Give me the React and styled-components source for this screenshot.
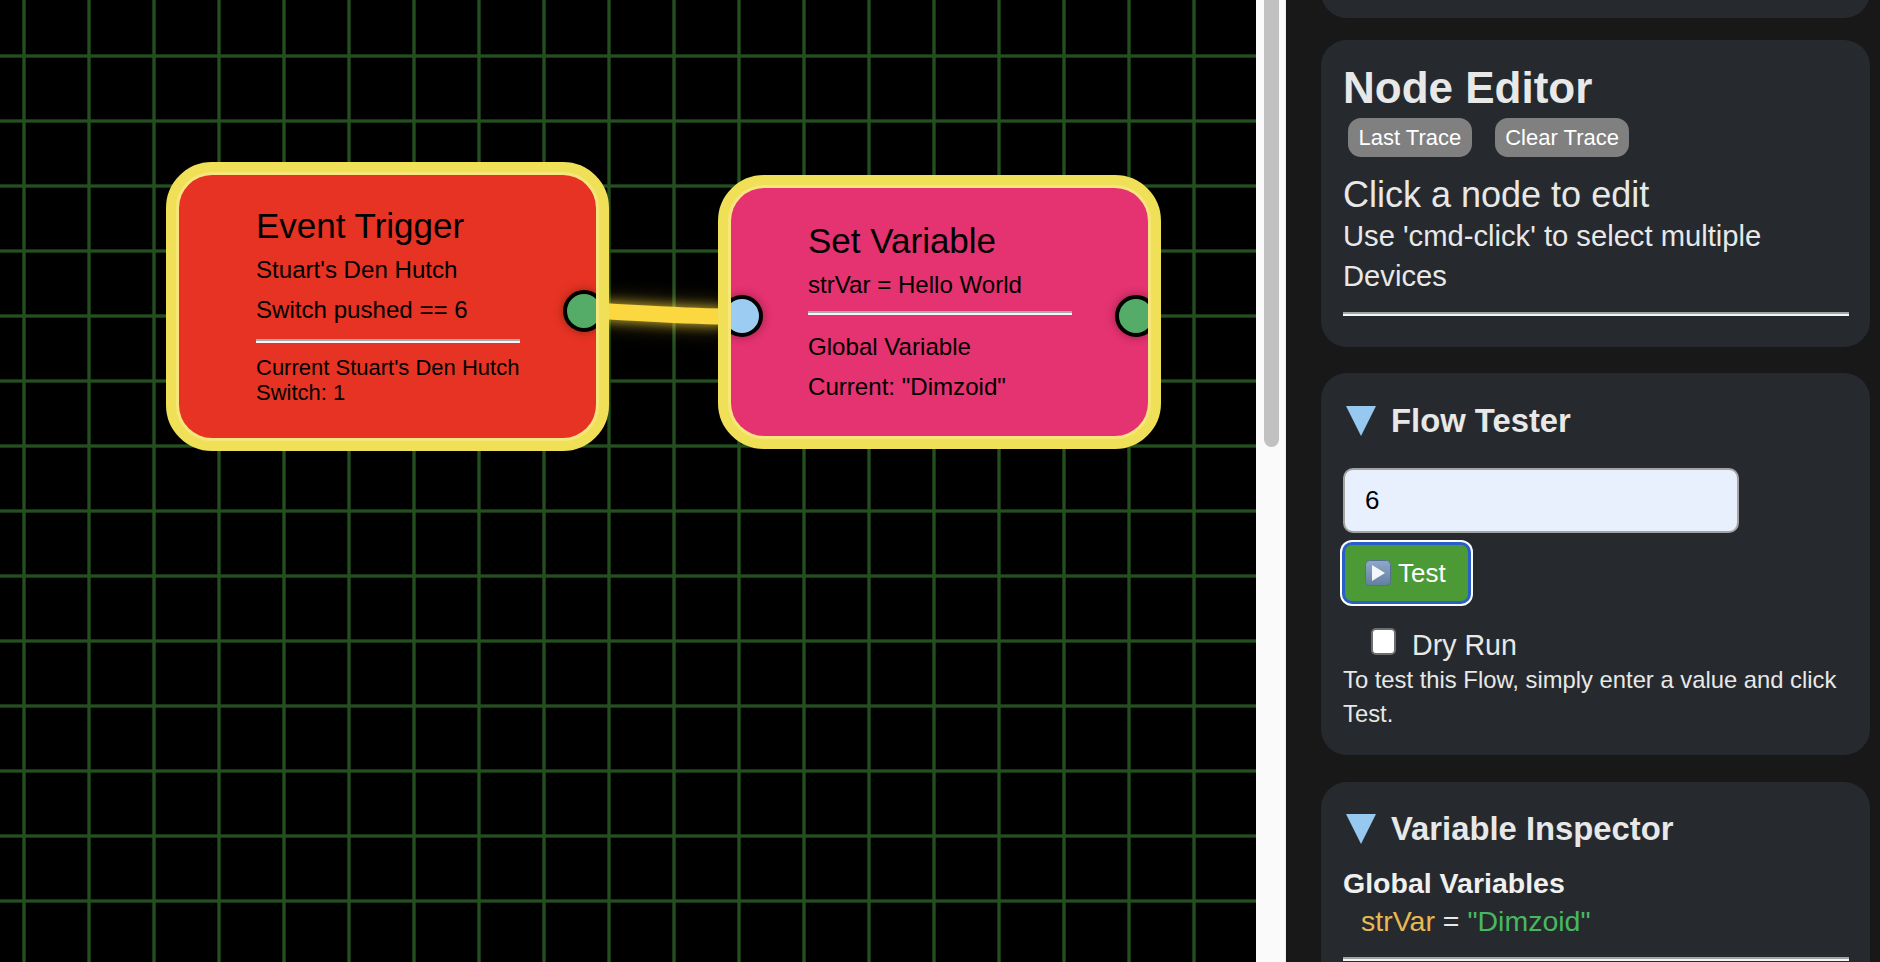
import React from 'react'
import styled, { createGlobalStyle } from 'styled-components'

const GlobalStyle = createGlobalStyle`
  html, body {
    margin: 0;
    height: 100%;
    overflow: hidden;
    background: #181818;
    font-family: "Liberation Sans", Arial, sans-serif;
  }
`

const Page = styled.div`
  display: flex;
  width: 1880px;
  height: 962px;
  overflow: hidden;
`

const Canvas = styled.div`
  position: relative;
  flex: 0 0 1256px;
  height: 100%;
  overflow: hidden;
  background-color: #000;
  background-image:
    linear-gradient(90deg, transparent 21.5px, #245020 23px, #245020 25px, transparent 26.5px),
    linear-gradient(180deg, transparent 53.5px, #245020 55px, #245020 57px, transparent 58.5px);
  background-size: 65px 65px;
`

const Edge = styled.svg`
  position: absolute;
  left: 0;
  top: 0;
  width: 1256px;
  height: 962px;
  filter: drop-shadow(0 0 6px rgba(251, 216, 63, 0.7)) drop-shadow(0 0 10px rgba(251, 216, 63, 0.4));
`

const NodeFrame = styled.div`
  position: absolute;
  left: ${p => p.$x}px;
  top: ${p => p.$y}px;
  width: 443px;
  height: ${p => p.$h}px;
  box-sizing: border-box;
  padding: 3px;
  border: 10px solid #efe058;
  border-radius: 46px;
  background: #f6e67c;
`

const NodeBody = styled.div`
  position: relative;
  box-sizing: border-box;
  height: 100%;
  border-radius: 33px;
  background: ${p => p.$color};
  overflow: hidden;
  padding: ${p => p.$top}px 0 0 77px;
  color: #000;
`

const NodeTitle = styled.div`
  font-size: 35px;
  line-height: 40px;
  margin-bottom: 4px;
`

const NodeLine = styled.div`
  font-size: 24.1px;
  line-height: 40px;
`

const NodeSmall = styled.div`
  font-size: 22px;
  line-height: 25px;
  width: 270px;
`

const NodeRule = styled.div`
  width: 264px;
  height: 4px;
  margin: ${p => p.$before}px 0 ${p => p.$after}px;
  background: linear-gradient(180deg, #ababab 0 45%, #f5f5f5 45%);
`

const Port = styled.div`
  position: absolute;
  top: ${p => p.$top}px;
  ${p => (p.$side === 'left' ? 'left: -10px;' : 'right: -9px;')}
  box-sizing: border-box;
  width: 42px;
  height: 42px;
  border: 4px solid #000;
  border-radius: 50%;
  background: ${p => p.$color};
  box-shadow: 0 0 10px rgba(0, 0, 0, 0.35);
`

const ScrollTrack = styled.div`
  flex: 0 0 30px;
  box-sizing: border-box;
  padding: 0 6px 0 8px;
  background: #fafafa;
  border-right: 1px solid #ececec;
`

const ScrollThumb = styled.div`
  height: 447px;
  border-radius: 0 0 8px 8px;
  background: #c1c1c1;
`

const Panel = styled.div`
  flex: 1;
  padding: 0 10px 0 35px;
  background: #181818;
  color: #e8e8e8;
  overflow: hidden;
`

const Card = styled.div`
  box-sizing: border-box;
  padding: 0 21px 0 22px;
  margin-bottom: 26px;
  border-radius: 26px;
  background: #262a2e;
`

const ScrolledCard = styled(Card)`
  height: 78px;
  margin-top: -60px;
  margin-bottom: 22px;
`

const EditorCard = styled(Card)`
  height: 307px;
  padding-top: 23px;
`

const TesterCard = styled(Card)`
  height: 382px;
  padding-top: 28px;
  margin-bottom: 27px;
`

const InspectorCard = styled(Card)`
  height: 300px;
  padding-top: 27px;
`

const Heading = styled.h2`
  margin: 0;
  font-size: 44px;
  line-height: 50px;
  font-weight: bold;
`

const TraceButtons = styled.div`
  display: flex;
  gap: 23px;
  margin: 5px 0 19px 5px;
`

const TraceButton = styled.button`
  height: 39px;
  padding: 0 10.5px;
  border: 0;
  border-radius: 13px;
  background: #808080;
  color: #fff;
  font: 22px/39px "Liberation Sans", Arial, sans-serif;
`

const Lead = styled.div`
  font-size: 36px;
  line-height: 38px;
  margin-bottom: 2px;
`

const Hint = styled.div`
  font-size: 29.2px;
  line-height: 40px;
`

const Rule = styled.div`
  height: 4px;
  margin-top: ${p => p.$before}px;
  background: linear-gradient(180deg, #a3a3a3 0 50%, #f5f5f5 50%);
`

const SectionHeader = styled.div`
  display: flex;
  align-items: center;
  gap: 15px;
  padding-left: 3px;
`

const Triangle = styled.span`
  width: 0;
  height: 0;
  border-left: 15px solid transparent;
  border-right: 15px solid transparent;
  border-top: 30px solid #96c8f0;
`

const SectionTitle = styled.h3`
  margin: 0;
  font-size: 32.8px;
  line-height: 40px;
  font-weight: bold;
`

const ValueInput = styled.input`
  display: block;
  box-sizing: border-box;
  width: 396px;
  height: 65px;
  margin-top: 27px;
  padding: 0 20px;
  border: 2px solid #a3a3a3;
  border-radius: 10px;
  background: #e8f0fe;
  color: #000;
  font: 26px "Liberation Sans", Arial, sans-serif;
  outline: none;
`

const TestButton = styled.button`
  display: flex;
  align-items: center;
  gap: 7px;
  box-sizing: border-box;
  width: 123px;
  height: 56px;
  margin: 12px 0 0 2px;
  padding: 0 0 0 20px;
  border: 0;
  border-radius: 7px;
  background: #4c9a35;
  box-shadow: 0 0 0 3px #2b5fc8, 0 0 0 5px #fff;
  color: #fff;
  font: 26px "Liberation Sans", Arial, sans-serif;
`

const DryRunRow = styled.label`
  display: flex;
  align-items: flex-start;
  gap: 16px;
  margin: 26px 0 0 28px;
  font-size: 28.6px;
  line-height: 36px;
`

const DryRunBox = styled.input`
  appearance: none;
  box-sizing: border-box;
  width: 25px;
  height: 27px;
  margin: 1px 0 0;
  border: 2px solid #6e6e6e;
  border-radius: 5px;
  background: #fff;
`

const HelpText = styled.div`
  font-size: 23.8px;
  line-height: 33.5px;
`

const GroupTitle = styled.div`
  margin-top: 16px;
  font-size: 28.5px;
  font-weight: bold;
  line-height: 36px;
  color: #f0f0f0;
`

const VariableRow = styled.div`
  margin: 0 0 0 18px;
  font-size: 28.5px;
  line-height: 40px;
`

const VarName = styled.span`
  color: #e8b952;
`

const VarValue = styled.span`
  color: #48b860;
`

const PlayEmoji = () => (
  <svg width="26" height="26" viewBox="0 0 26 26">
    <defs>
      <linearGradient id="play" x1="0" y1="0" x2="0" y2="1">
        <stop offset="0" stopColor="#8fa9c9" />
        <stop offset="1" stopColor="#64809f" />
      </linearGradient>
    </defs>
    <rect x="0.5" y="0.5" width="25" height="25" rx="4" fill="url(#play)" stroke="#55708f" />
    <path d="M7 5 L20 13 L7 21 Z" fill="#f4f6f9" />
  </svg>
)

export default function App() {
  return (
    <Page>
      <GlobalStyle />
      <Canvas>
        <Edge viewBox="0 0 1256 962">
          <path d="M600 311 C 640 313, 680 316, 725 316.5" fill="none" stroke="#fbd83f" strokeWidth="16" />
        </Edge>
        <NodeFrame $x={166} $y={162} $h={289}>
          <NodeBody $color="#e63323" $top={31}>
            <NodeTitle>Event Trigger</NodeTitle>
            <NodeLine>Stuart's Den Hutch</NodeLine>
            <NodeLine>Switch pushed == 6</NodeLine>
            <NodeRule $before={9} $after={12} />
            <NodeSmall>Current Stuart's Den Hutch Switch: 1</NodeSmall>
            <Port $side="right" $top={115} $color="#54ac68" />
          </NodeBody>
        </NodeFrame>
        <NodeFrame $x={718} $y={175} $h={274}>
          <NodeBody $color="#e53270" $top={33}>
            <NodeTitle>Set Variable</NodeTitle>
            <NodeLine>strVar = Hello World</NodeLine>
            <NodeRule $before={6} $after={12} />
            <NodeLine>Global Variable</NodeLine>
            <NodeLine>Current: "Dimzoid"</NodeLine>
            <Port $side="left" $top={107} $color="#9cccf2" />
            <Port $side="right" $top={107} $color="#54ac68" />
          </NodeBody>
        </NodeFrame>
      </Canvas>
      <ScrollTrack>
        <ScrollThumb />
      </ScrollTrack>
      <Panel>
        <ScrolledCard />
        <EditorCard>
          <Heading>Node Editor</Heading>
          <TraceButtons>
            <TraceButton>Last Trace</TraceButton>
            <TraceButton>Clear Trace</TraceButton>
          </TraceButtons>
          <Lead>Click a node to edit</Lead>
          <Hint>Use 'cmd-click' to select multiple Devices</Hint>
          <Rule $before={16} />
        </EditorCard>
        <TesterCard>
          <SectionHeader>
            <Triangle />
            <SectionTitle>Flow Tester</SectionTitle>
          </SectionHeader>
          <ValueInput defaultValue="6" />
          <TestButton>
            <PlayEmoji />
            Test
          </TestButton>
          <DryRunRow>
            <DryRunBox type="checkbox" />
            Dry Run
          </DryRunRow>
          <HelpText>To test this Flow, simply enter a value and click Test.</HelpText>
        </TesterCard>
        <InspectorCard>
          <SectionHeader>
            <Triangle />
            <SectionTitle>Variable Inspector</SectionTitle>
          </SectionHeader>
          <GroupTitle>Global Variables</GroupTitle>
          <VariableRow>
            <VarName>strVar</VarName> = <VarValue>"Dimzoid"</VarValue>
          </VariableRow>
          <Rule $before={16} />
        </InspectorCard>
      </Panel>
    </Page>
  )
}
